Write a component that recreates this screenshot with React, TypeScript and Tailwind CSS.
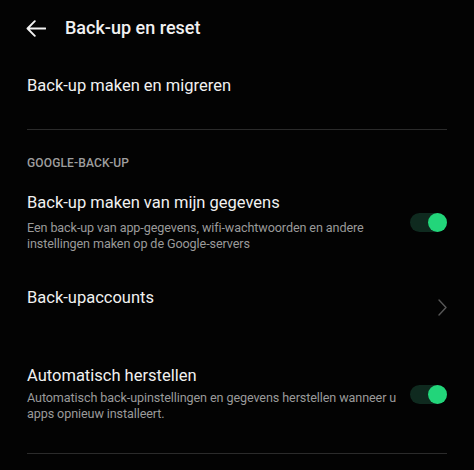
const Toggle = () => (
  <div className="relative h-[19px] w-[37px] shrink-0 rounded-full bg-[#0f2a1f]">
    <div className="absolute right-0 top-0 h-[19px] w-[19px] rounded-full bg-[#22d57a]" />
  </div>
);

const BackArrow = () => (
  <svg width="20" height="17" viewBox="0 0 20 17" fill="none">
    <path d="M19.5 8.5H1.5M8.8 1.2L1.5 8.5l7.3 7.3" stroke="#f2f2f2" strokeWidth="1.9" strokeLinecap="round" strokeLinejoin="round" />
  </svg>
);

const Chevron = () => (
  <svg width="9" height="17" viewBox="0 0 9 17" fill="none">
    <path d="M1 1l7 7.5L1 16" stroke="#575757" strokeWidth="1.4" strokeLinecap="round" strokeLinejoin="round" />
  </svg>
);

export default function App() {
  return (
    <div className="h-[470px] w-[474px] overflow-hidden bg-[#030303] font-['Roboto',sans-serif] text-[#f1f1f1]">
      {/* Header */}
      <div className="mt-[16px] flex h-[24px] items-center pl-[26px]">
        <BackArrow />
        <h1 className="ml-[19px] text-[18px] font-medium leading-[24px]">Back-up en reset</h1>
      </div>

      <div className="px-[27px]">
        <div className="mt-[36px] text-[16.5px] leading-[20px]">Back-up maken en migreren</div>
        <div className="mt-[33px] h-px bg-[#2b2b2b]" />

        {/* Google back-up section */}
        <div className="mt-[25px] text-[12px] font-medium leading-[16px] tracking-[0.15px] text-[#9e9e9e]">GOOGLE-BACK-UP</div>

        <div className="mt-[22px] flex items-center justify-between">
          <div className="w-[372px]">
            <div className="text-[16.5px] leading-[20px]">Back-up maken van mijn gegevens</div>
            <div className="mt-[7px] text-[12.6px] leading-[16px] tracking-[-0.1px] text-[#9a9a9a]">
              Een back-up van app-gegevens, wifi-wachtwoorden en andere instellingen maken op de Google-servers
            </div>
          </div>
          <Toggle />
        </div>

        <div className="mt-[36px] flex items-start justify-between">
          <div className="text-[16.5px] leading-[20px]">Back-upaccounts</div>
          <div className="mt-[11px]">
            <Chevron />
          </div>
        </div>

        <div className="mt-[50px] flex items-center justify-between">
          <div className="w-[372px]">
            <div className="text-[16.5px] leading-[20px]">Automatisch herstellen</div>
            <div className="mt-[4px] text-[12.6px] leading-[16px] tracking-[-0.1px] text-[#9a9a9a]">
              Automatisch back-upinstellingen en gegevens herstellen wanneer u apps opnieuw installeert.
            </div>
          </div>
          <Toggle />
        </div>

        <div className="mt-[31px] h-px bg-[#2b2b2b]" />
      </div>
    </div>
  );
}
